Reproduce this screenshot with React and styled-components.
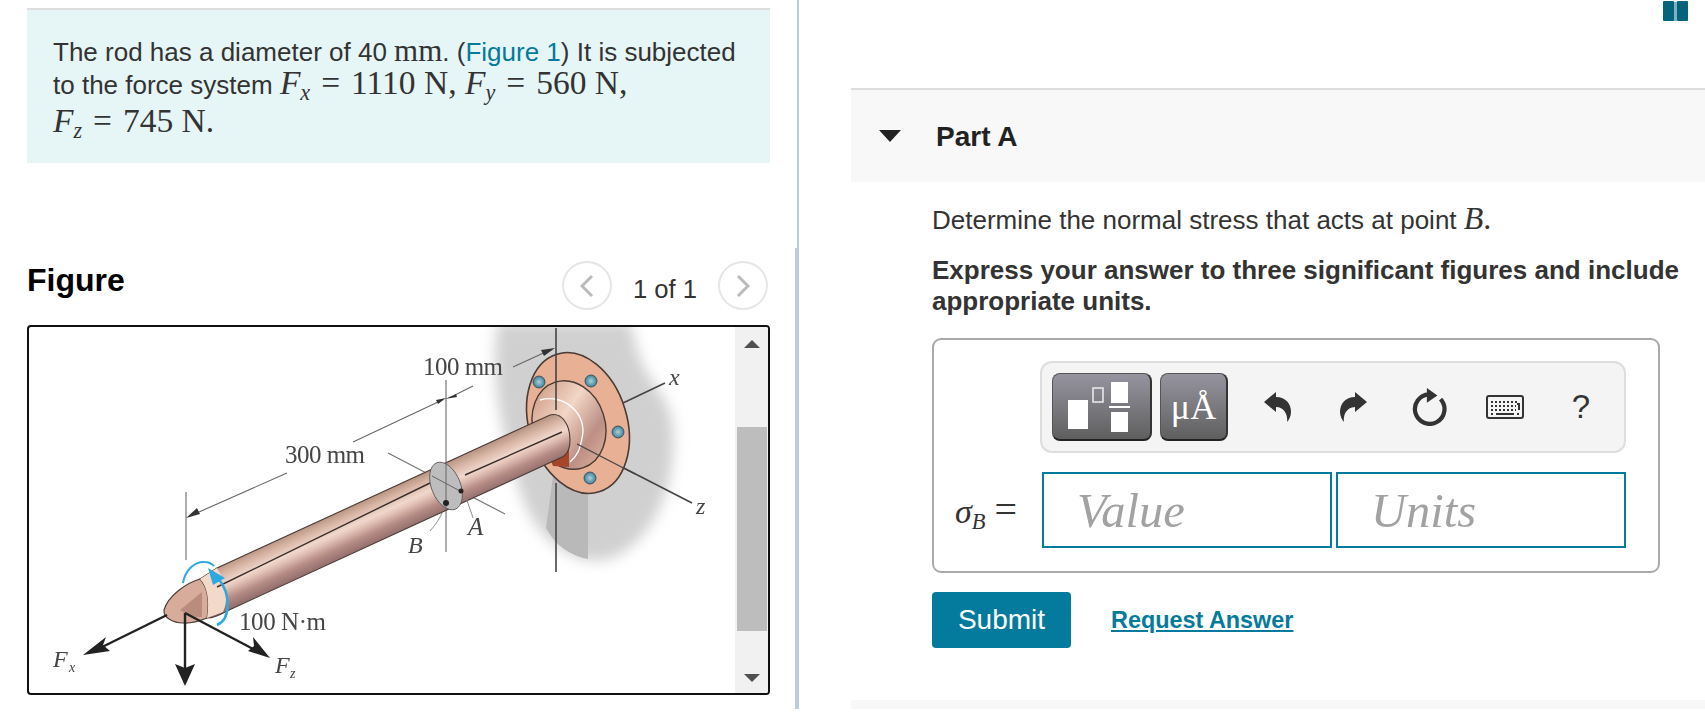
import React from 'react';
import styled, { createGlobalStyle } from 'styled-components';

const GlobalStyle = createGlobalStyle`
  html, body {
    margin: 0;
    padding: 0;
    background: #fff;
    overflow: hidden;
  }
  body {
    font-family: "Liberation Sans", Arial, sans-serif;
    color: #333;
  }
`;

const Page = styled.div`
  display: flex;
  width: 1705px;
  height: 720px;
  overflow: hidden;
`;

const LeftPane = styled.section`
  box-sizing: border-box;
  width: 794px;
  flex: none;
  padding: 8px 24px 0 27px;
`;

const Splitter = styled.div`
  width: 5px;
  flex: none;
  display: flex;
  flex-direction: column;
  align-items: flex-end;
`;

const SplitterPiece = styled.div`
  width: ${props => props.$w}px;
  height: ${props => props.$h}px;
  background: #b9cde0;
`;

const RightPane = styled.section`
  flex: 1;
  padding-left: 52px;
  min-width: 0;
`;

const Intro = styled.div`
  box-sizing: border-box;
  height: 155px;
  background: #e6f5f6;
  border-top: 2px solid #ddd;
  padding: 25px 26px 0;
  font-size: 26px;
  color: #333;
`;

const IntroLine = styled.div`
  line-height: 32px;
  white-space: nowrap;
  margin-top: ${props => props.$gap || 0}px;
`;

const MathText = styled.span`
  font-family: "Liberation Serif", "Times New Roman", serif;
  font-size: ${props => props.$size || 32}px;
  line-height: 1;
`;

const MathVar = styled.i`
  font-family: "Liberation Serif", "Times New Roman", serif;
`;

const Sub = styled.sub`
  font-size: 0.66em;
  font-style: italic;
  line-height: 0;
  vertical-align: -0.25em;
`;

const MathEq = styled.span`
  margin: 0 ${props => props.$space || 11}px;
  font-size: ${props => props.$size || 'inherit'};
  line-height: 1;
`;

const FigureLink = styled.a`
  color: #047a9c;
`;

const FigureHead = styled.div`
  display: flex;
  align-items: center;
  justify-content: space-between;
  margin-top: 98px;
  height: 49px;
  padding-right: 2px;
`;

const FigureTitle = styled.h2`
  margin: -11px 0 0;
  font-size: 32px;
  font-weight: 700;
  color: #000;
`;

const Pager = styled.div`
  display: flex;
  align-items: center;
`;

const PagerButton = styled.button`
  box-sizing: border-box;
  width: 50px;
  height: 49px;
  padding: 0;
  border: 2px solid #e6e6e6;
  border-radius: 50%;
  background: #fff;
  display: flex;
  align-items: center;
  justify-content: center;
`;

const PagerLabel = styled.span`
  width: 106px;
  text-align: center;
  font-size: 25.6px;
  padding-top: 8px;
  color: #333;
`;

const FigureFrame = styled.div`
  box-sizing: border-box;
  display: flex;
  margin-top: 15px;
  height: 370px;
  width: 743px;
  border: 2px solid #111;
  border-radius: 4px;
  overflow: hidden;
  background: #fff;
`;

const Illustration = styled.svg`
  display: block;
  flex: 1;
  min-width: 0;
  height: 100%;
`;

const Scrollbar = styled.div`
  width: 33px;
  flex: none;
  background: #f1f1f1;
  display: flex;
  flex-direction: column;
  align-items: center;
`;

const ScrollCap = styled.div`
  flex: none;
  height: ${props => props.$h}px;
  width: 100%;
  display: flex;
  align-items: ${props => (props.$down ? 'flex-end' : 'flex-start')};
  justify-content: center;
  padding: ${props => (props.$down ? '0 0 11px' : '13px 0 0')};
  box-sizing: border-box;
`;

const Arrow = styled.div`
  width: 0;
  height: 0;
  border-left: 8px solid transparent;
  border-right: 8px solid transparent;
  ${props =>
    props.$down ? 'border-top: 8px solid #505050;' : 'border-bottom: 8px solid #505050;'}
`;

const ScrollThumb = styled.div`
  width: 30px;
  height: 204px;
  background: #bdbdbd;
`;

const BookBar = styled.div`
  height: 88px;
  display: flex;
  justify-content: flex-end;
  padding: 1px 17px 0 0;
  box-sizing: border-box;
`;

const PartHeader = styled.div`
  box-sizing: border-box;
  height: 94px;
  display: flex;
  align-items: center;
  background: #f8f8f8;
  border-top: 2px solid #ddd;
  padding-left: 28px;
`;

const Caret = styled.div`
  width: 0;
  height: 0;
  border-left: 11px solid transparent;
  border-right: 11px solid transparent;
  border-top: 12px solid #222;
`;

const PartTitle = styled.h3`
  margin: 2px 0 0 35px;
  font-size: 28px;
  font-weight: 700;
  color: #222;
`;

const PartBody = styled.div`
  width: 760px;
  margin-left: 81px;
  padding-top: 20px;
`;

const Prompt = styled.p`
  margin: 0;
  font-size: 26px;
  line-height: 34px;
  color: #333;
`;

const Instruction = styled.p`
  margin: 18px 0 0;
  font-size: 26px;
  line-height: 31px;
  font-weight: 700;
  color: #333;
`;

const AnswerBox = styled.div`
  box-sizing: border-box;
  width: 728px;
  height: 235px;
  margin-top: 21px;
  border: 2px solid #aaa;
  border-radius: 9px;
  padding: 21px 32px 0 106px;
`;

const Toolbar = styled.div`
  box-sizing: border-box;
  height: 92px;
  display: flex;
  align-items: center;
  background: #f4f4f4;
  border: 2px solid #ddd;
  border-radius: 12px;
  padding-left: 10px;
`;

const TemplateButton = styled.button`
  box-sizing: border-box;
  width: ${props => props.$w}px;
  height: 68px;
  margin-right: 8px;
  padding: 0;
  flex: none;
  display: flex;
  align-items: center;
  justify-content: center;
  background: linear-gradient(#96949f, #5f5f5f);
  border: 1px solid #555;
  border-bottom: 2px solid #222;
  border-right: 2px solid #333;
  border-radius: 8px;
  color: #fff;
  font-family: "Liberation Serif", serif;
  font-size: 36px;
`;

const ToolGroup = styled.div`
  display: flex;
  align-items: center;
  margin-left: 3px;
`;

const ToolIcon = styled.div`
  flex: none;
  width: 76px;
  display: flex;
  justify-content: center;
`;

const HelpMark = styled.span`
  font-size: 33px;
  color: #333;
`;

const AnswerRow = styled.div`
  display: flex;
  align-items: center;
  margin-top: 19px;
  margin-left: -90px;
`;

const AnswerLabel = styled.div`
  width: 92px;
  flex: none;
  padding-left: 5px;
  box-sizing: border-box;
  font-family: "Liberation Serif", serif;
  font-size: 34px;
  color: #333;
  white-space: nowrap;
`;

const AnswerField = styled.div`
  box-sizing: border-box;
  width: 290px;
  height: 76px;
  margin-right: 4px;
  flex: none;
  border: 2px solid #047a9c;
  padding-left: 33px;
  display: flex;
  align-items: center;
  font-family: "Liberation Serif", serif;
  font-style: italic;
  font-size: 48.5px;
  color: #a2a2a2;
`;

const ActionRow = styled.div`
  display: flex;
  align-items: center;
  margin-top: 19px;
`;

const SubmitButton = styled.button`
  width: 139px;
  height: 56px;
  border: 0;
  border-radius: 4px;
  background: #047a9c;
  color: #fff;
  font-family: "Liberation Sans", Arial, sans-serif;
  font-size: 28px;
`;

const RequestLink = styled.a`
  margin-left: 40px;
  color: #047a9c;
  font-size: 23.4px;
  font-weight: 700;
  text-decoration: underline;
`;

const FooterBand = styled.div`
  height: 9px;
  margin-top: 52px;
  background: #f8f8f8;
`;

const labelFont = '"Liberation Serif", serif';

function RodDrawing() {
  return (
    <Illustration viewBox="29 327 706 366" preserveAspectRatio="none">
      <defs>
        <linearGradient id="rodFill" gradientUnits="userSpaceOnUse" x1="400" y1="483" x2="419" y2="525">
          <stop offset="0" stopColor="#b5917f" />
          <stop offset="0.2" stopColor="#d9b5a5" />
          <stop offset="0.42" stopColor="#f0d8cc" />
          <stop offset="0.52" stopColor="#e5c4b8" />
          <stop offset="0.75" stopColor="#b58b85" />
          <stop offset="1" stopColor="#8d6a68" />
        </linearGradient>
        <linearGradient id="hubFill" x1="0.2" y1="0" x2="0.8" y2="1">
          <stop offset="0" stopColor="#cf9c86" />
          <stop offset="0.4" stopColor="#f2d6c6" />
          <stop offset="0.75" stopColor="#bd8f85" />
          <stop offset="1" stopColor="#dcae99" />
        </linearGradient>
        <radialGradient id="boltFill">
          <stop offset="0" stopColor="#a8d3de" />
          <stop offset="1" stopColor="#3f7f93" />
        </radialGradient>
        <filter id="soft" x="-5%" y="-5%" width="110%" height="110%">
          <feGaussianBlur stdDeviation="0.6" />
        </filter>
        <filter id="wallBlur" x="-20%" y="-20%" width="140%" height="140%">
          <feGaussianBlur stdDeviation="7" />
        </filter>
      </defs>

      <path
        d="M498 322 C488 380 505 450 525 505 C545 550 585 568 612 558 C655 540 680 480 672 420 C668 395 642 375 636 345 L630 322 Z"
        fill="#d0d0d0"
        filter="url(#wallBlur)"
      />
      <g filter="url(#soft)">
        <path d="M553 476 L588 490 L588 559 C570 556 555 545 546 528 Z" fill="#b9b9b9" />
        <path d="M186 492 V560 M446 380 V552 M388 453 L505 514" stroke="#777" strokeWidth="1.2" fill="none" />
        <path d="M556 483 V572" stroke="#444" strokeWidth="1.6" fill="none" />
        <path d="M623 403 L665 383 M577 444 L692 503" stroke="#444" strokeWidth="1.6" fill="none" />

        <ellipse cx="578" cy="423" rx="49" ry="72" transform="rotate(-17 578 423)" fill="#e8b196" stroke="#4a3a34" strokeWidth="1.6" />
        <circle cx="539" cy="382" r="6" fill="url(#boltFill)" stroke="#345" strokeWidth="0.8" />
        <circle cx="591" cy="381" r="6" fill="url(#boltFill)" stroke="#345" strokeWidth="0.8" />
        <circle cx="618" cy="432" r="6" fill="url(#boltFill)" stroke="#345" strokeWidth="0.8" />
        <circle cx="590" cy="478" r="6" fill="url(#boltFill)" stroke="#345" strokeWidth="0.8" />
        <ellipse cx="569" cy="425" rx="36" ry="45" transform="rotate(-18 569 425)" fill="url(#hubFill)" stroke="#4a3a34" strokeWidth="1.4" />
        <path d="M540 400 C565 393 588 415 582 438 C580 450 577 456 570 462" stroke="#fff" strokeWidth="1.3" fill="none" />
        <path d="M549 456 L569 448 L569 467 L553 466 Z" fill="#a5452a" />
        <path d="M556 328 V410" stroke="#444" strokeWidth="1.6" fill="none" />
        <path d="M577 444 L635 474" stroke="#444" strokeWidth="1.4" fill="none" />

        <path
          d="M217 568 L550 415 C562 412 570 425 570 440 C570 450 566 456 560 458 L227 611 C220 615 212 618 207 618 L200 579 Z"
          fill="url(#rodFill)"
          stroke="#4a3a34"
          strokeWidth="1.1"
        />
        <path d="M200 579 C186 583 168 596 164 610 C163 618 174 623 183 623 C192 624 202 620 207 618 C210 600 207 586 200 579 Z" fill="#d8ac9a" stroke="#4a3a34" strokeWidth="1.1" />
        <path d="M200 579 C207 586 210 600 207 618 L223 612 C229 600 226 582 217 568 Z" fill="#f3d9c9" />
        <path d="M180 610 L202 592 L202 617 C194 618 186 614 180 610 Z" fill="#b98c7d" />
        <path d="M217 587 L430 483 M465 475 L562 432" stroke="#3a2e2c" strokeWidth="1.4" fill="none" />
        <ellipse cx="446" cy="486" rx="14.5" ry="25" transform="rotate(-22 446 486)" fill="#bdbdbd" stroke="#555" strokeWidth="0.8" />
        <path d="M446 462 V509 M432 476 L460 491" stroke="#666" strokeWidth="1" fill="none" />
        <circle cx="446" cy="503" r="3" fill="#222" />
        <circle cx="461" cy="491" r="2.5" fill="#222" />
        <path d="M442 513 C438 522 434 526 430 531 M467 500 C470 510 472 514 473 518" stroke="#888" strokeWidth="1" fill="none" />

        <path d="M513 367 L550 350" stroke="#666" strokeWidth="1.1" />
        <path d="M555 348 L541 350 L544 356 Z" fill="#333" />
        <path d="M473 386 L455 395 M438 402 L353 442 M287 473 L190 516" stroke="#666" strokeWidth="1.1" fill="none" />
        <path d="M445 399 L456 394 L457 397 Z M446 398 L436 400 L438 404 Z M186 518 L200 514 L197 508 Z" fill="#333" />

        <path d="M183 583 C185 570 195 561 205 562 C209 562 212 564 214 566" stroke="#2ea9de" strokeWidth="2" fill="none" />
        <path d="M217 625 C230 620 232 595 218 578" stroke="#2ea9de" strokeWidth="2.6" fill="none" />
        <path d="M208 568 L225 578 L213 585 Z" fill="#2ea9de" />

        <path d="M167 615 L92 652 M185 613 V672 M185 613 L255 650" stroke="#222" strokeWidth="2.4" fill="none" />
        <path d="M83 655 L106 637 L103 645 L110 651 Z" fill="#222" />
        <path d="M185 686 L175 664 L185 668 L195 664 Z" fill="#222" />
        <path d="M270 658 L248 651 L254 646 L253 637 Z" fill="#222" />

        <text x="285" y="463" fontFamily={labelFont} fontSize="25" fill="#444" textLength="80">300 mm</text>
        <text x="423" y="375" fontFamily={labelFont} fontSize="25" fill="#444" textLength="80">100 mm</text>
        <text x="239" y="630" fontFamily={labelFont} fontSize="25" fill="#444" textLength="87">100 N·m</text>
        <text x="669" y="385" fontFamily={labelFont} fontSize="24" fontStyle="italic" fill="#444">x</text>
        <text x="696" y="514" fontFamily={labelFont} fontSize="24" fontStyle="italic" fill="#444">z</text>
        <text x="468" y="535" fontFamily={labelFont} fontSize="25" fontStyle="italic" fill="#444">A</text>
        <text x="408" y="553" fontFamily={labelFont} fontSize="24" fontStyle="italic" fill="#444">B</text>
        <text x="53" y="667" fontFamily={labelFont} fontSize="24" fontStyle="italic" fill="#444">F</text>
        <text x="69" y="672" fontFamily={labelFont} fontSize="14" fontStyle="italic" fill="#444">x</text>
        <text x="275" y="673" fontFamily={labelFont} fontSize="24" fontStyle="italic" fill="#444">F</text>
        <text x="290" y="678" fontFamily={labelFont} fontSize="14" fontStyle="italic" fill="#444">z</text>
      </g>
    </Illustration>
  );
}

const BookIcon = () => (
  <svg width="25" height="20" viewBox="0 0 25 20">
    <rect x="0" y="0" width="11" height="20" rx="1" fill="#05647c" />
    <rect x="14" y="0" width="11" height="20" rx="1" fill="#05647c" />
    <rect x="11" y="1" width="3" height="19" fill="#7fb2c0" />
  </svg>
);

const Chevron = ({ flip }) => (
  <svg width="14" height="24" viewBox="0 0 14 24">
    <path d={flip ? 'M2 2 L12 12 L2 22' : 'M12 2 L2 12 L12 22'} stroke="#bbb" strokeWidth="3" fill="none" />
  </svg>
);

const TemplateGlyph = () => (
  <svg width="68" height="50" viewBox="0 0 68 50">
    <rect x="0" y="18" width="20" height="29" fill="#fff" />
    <rect x="25" y="6" width="10" height="14" fill="none" stroke="#e8e8e8" strokeWidth="1.6" />
    <rect x="43" y="0" width="17" height="21" fill="#fff" />
    <rect x="41" y="24" width="21" height="2" fill="#fff" />
    <rect x="43" y="30" width="17" height="20" fill="#fff" />
  </svg>
);

const UndoIcon = ({ flip }) => (
  <svg width="27" height="30" viewBox="0 0 27 30" style={flip ? { transform: 'scaleX(-1)' } : undefined}>
    <path d="M0 10 L12 0 V5 C22 5 27 12 27 20 C27 24 25 28 23 30 C24 24 21 15 12 15 V20 Z" fill="#333" />
  </svg>
);

const RefreshIcon = () => (
  <svg width="35" height="38" viewBox="0 0 33 36">
    <path d="M16 6 A14 14 0 1 0 27 10.5" stroke="#333" strokeWidth="4" fill="none" />
    <path d="M14 0 L24 7 L14 14 Z" fill="#333" />
  </svg>
);

const KeyboardIcon = () => (
  <svg width="38" height="24" viewBox="0 0 38 24">
    <rect x="1" y="1" width="36" height="22" rx="2" fill="none" stroke="#333" strokeWidth="2" />
    <path d="M5 7 H33 M5 11 H30 M5 15 H30" stroke="#333" strokeWidth="2" strokeDasharray="2 2" fill="none" />
    <path d="M31 9 H33 V15 M5 19 H7 M10 19 H28 M31 19 H33" stroke="#333" strokeWidth="2" fill="none" />
  </svg>
);

export default function App() {
  return (
    <Page>
      <GlobalStyle />
      <LeftPane>
        <Intro>
          <IntroLine>
            The rod has a diameter of 40 <MathText $size={31}>mm</MathText>. (<FigureLink>Figure 1</FigureLink>) It is subjected
          </IntroLine>
          <IntroLine $gap={-2}>
            to the force system{' '}
            <MathText $size={33.5}>
              <MathVar>F</MathVar><Sub>x</Sub><MathEq>=</MathEq>1110 N, <MathVar>F</MathVar><Sub>y</Sub><MathEq>=</MathEq>560 N,
            </MathText>
          </IntroLine>
          <IntroLine $gap={3}>
            <MathText $size={33.5}>
              <MathVar>F</MathVar><Sub>z</Sub><MathEq>=</MathEq>745 N.
            </MathText>
          </IntroLine>
        </Intro>
        <FigureHead>
          <FigureTitle>Figure</FigureTitle>
          <Pager>
            <PagerButton><Chevron /></PagerButton>
            <PagerLabel>1 of 1</PagerLabel>
            <PagerButton><Chevron flip /></PagerButton>
          </Pager>
        </FigureHead>
        <FigureFrame>
          <RodDrawing />
          <Scrollbar>
            <ScrollCap $h={100}><Arrow /></ScrollCap>
            <ScrollThumb />
            <ScrollCap $h={62} $down><Arrow $down /></ScrollCap>
          </Scrollbar>
        </FigureFrame>
      </LeftPane>
      <Splitter>
        <SplitterPiece $w={2} $h={248} />
        <SplitterPiece $w={4} $h={461} />
      </Splitter>
      <RightPane>
        <BookBar><BookIcon /></BookBar>
        <PartHeader>
          <Caret />
          <PartTitle>Part A</PartTitle>
        </PartHeader>
        <PartBody>
          <Prompt>
            Determine the normal stress that acts at point <MathText><MathVar>B</MathVar>.</MathText>
          </Prompt>
          <Instruction>Express your answer to three significant figures and include appropriate units.</Instruction>
          <AnswerBox>
            <Toolbar>
              <TemplateButton $w={100}><TemplateGlyph /></TemplateButton>
              <TemplateButton $w={68}>μÅ</TemplateButton>
              <ToolGroup>
                <ToolIcon><UndoIcon /></ToolIcon>
                <ToolIcon><UndoIcon flip /></ToolIcon>
                <ToolIcon><RefreshIcon /></ToolIcon>
                <ToolIcon><KeyboardIcon /></ToolIcon>
                <ToolIcon><HelpMark>?</HelpMark></ToolIcon>
              </ToolGroup>
            </Toolbar>
            <AnswerRow>
              <AnswerLabel><i>σ</i><Sub>B</Sub><MathEq $space={9} $size="40px">=</MathEq></AnswerLabel>
              <AnswerField>Value</AnswerField>
              <AnswerField>Units</AnswerField>
            </AnswerRow>
          </AnswerBox>
          <ActionRow>
            <SubmitButton>Submit</SubmitButton>
            <RequestLink>Request Answer</RequestLink>
          </ActionRow>
        </PartBody>
        <FooterBand />
      </RightPane>
    </Page>
  );
}
